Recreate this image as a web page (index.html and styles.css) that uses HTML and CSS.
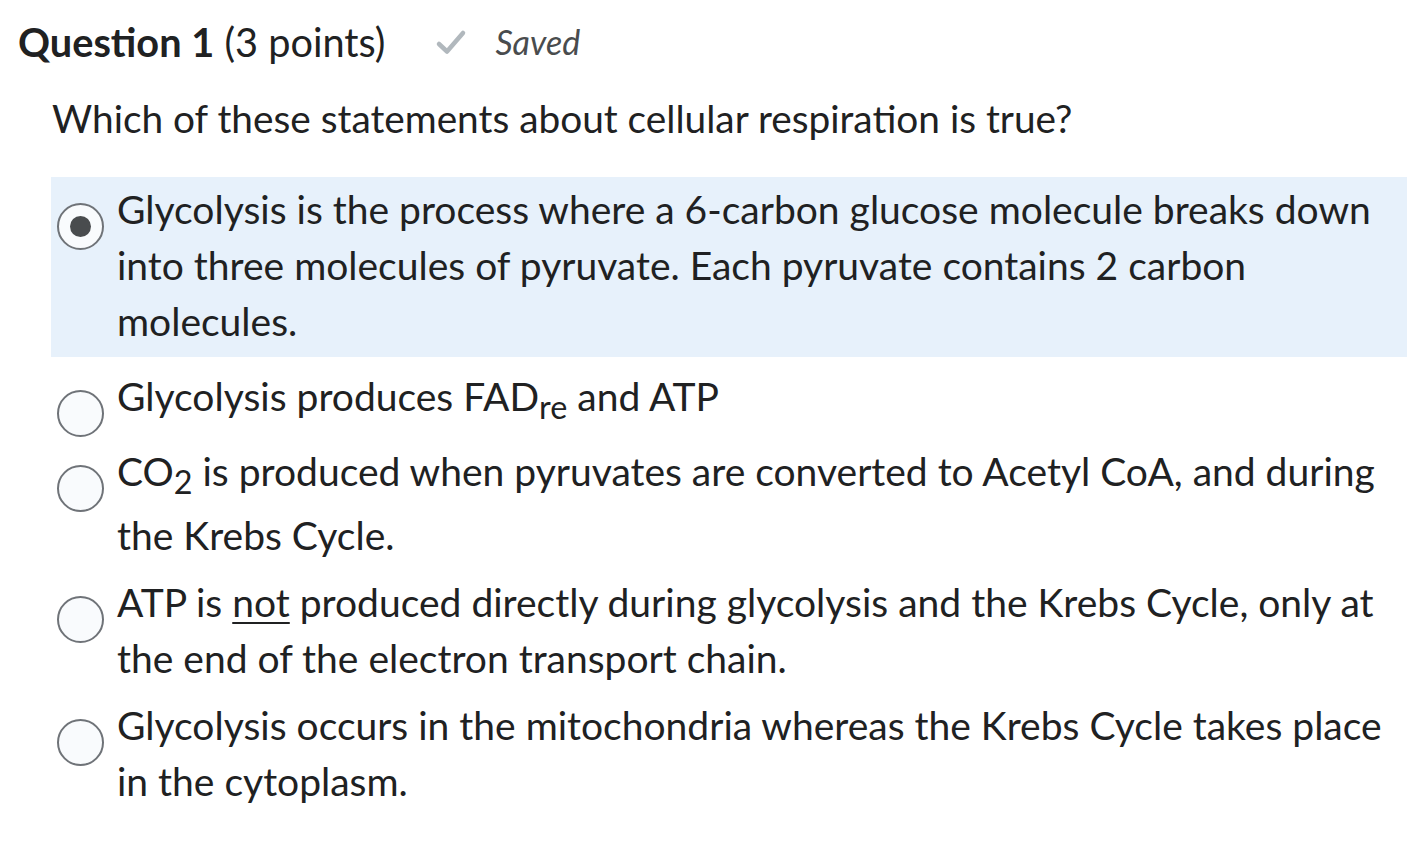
FILE: index.html
```html
<!DOCTYPE html>
<html>
<head>
<meta charset="utf-8">
<link rel="stylesheet" href="styles.css">
</head>
<body>
<div class="question">
  <div class="q-header">
    <h2 class="q-title"><strong>Question 1</strong> (3 points)</h2>
    <span class="saved">
      <svg class="check" width="32" height="28" viewBox="0 0 32 28"><path d="M4 16 L12 23.5 L28 5" fill="none" stroke="#b1b8bd" stroke-width="4.5" stroke-linecap="round" stroke-linejoin="round"/></svg>
      <em>Saved</em>
    </span>
  </div>
  <p class="prompt">Which of these statements about cellular respiration is true?</p>
  <div class="options">
    <label class="option selected">
      <span class="radio checked"><span class="dot"></span></span>
      <span class="otext">Glycolysis is the process where a 6-carbon glucose molecule breaks down into three molecules of pyruvate. Each pyruvate contains 2 carbon molecules.</span>
    </label>
    <label class="option">
      <span class="radio"></span>
      <span class="otext">Glycolysis produces FAD<sub>re</sub> and ATP</span>
    </label>
    <label class="option">
      <span class="radio"></span>
      <span class="otext">CO<sub>2</sub> is produced when pyruvates are converted to Acetyl CoA, and during the Krebs Cycle.</span>
    </label>
    <label class="option">
      <span class="radio"></span>
      <span class="otext">ATP is <u>not</u> produced directly during glycolysis and the Krebs Cycle, only at the end of the electron transport chain.</span>
    </label>
    <label class="option">
      <span class="radio"></span>
      <span class="otext">Glycolysis occurs in the mitochondria whereas the Krebs Cycle takes place in the cytoplasm.</span>
    </label>
  </div>
</div>
</body>
</html>
```
FILE: styles.css
```css
html, body {
  margin: 0;
  padding: 0;
  background: #ffffff;
}
body {
  font-family: Lato, "Noto Sans", sans-serif;
  color: #202122;
}
.question {
  padding: 14px 0 0 18px;
}
.q-header {
  display: flex;
  align-items: center;
  height: 56px;
}
.q-title {
  margin: 0;
  font-size: 39.7px;
  font-weight: 400;
  line-height: 56px;
}
.q-title strong {
  font-weight: 700;
}
.saved {
  display: flex;
  align-items: center;
  margin-left: 50px;
  color: #494c4e;
  font-size: 34px;
  line-height: 56px;
}
.saved .check {
  margin-right: 28px;
}
.saved em {
  font-style: italic;
}
.prompt {
  margin: 20px 0 0 34px;
  font-size: 38.8px;
  line-height: 56px;
}
.options {
  margin: 31px 0 0 33px;
  width: 1356px;
}
.option {
  display: flex;
  align-items: flex-start;
  padding: 6px 0 5px 6px;
  font-size: 39px;
  line-height: 56px;
}
.option.selected {
  background: #e7f1fb;
  padding-top: 4px;
  padding-bottom: 8px;
  margin-bottom: 5px;
}
.radio {
  flex: none;
  width: 43px;
  height: 43px;
  border: 2px solid #6f7378;
  border-radius: 50%;
  background: #f9fbfd;
  margin-top: 22px;
  margin-bottom: -16px;
  margin-right: 13px;
  display: flex;
  align-items: center;
  justify-content: center;
}
.dot {
  width: 21px;
  height: 21px;
  border-radius: 50%;
  background: #494c4e;
}
.otext sub {
  font-size: 0.83em;
  vertical-align: -8px;
  line-height: 50px;
}
.otext u {
  text-decoration-thickness: 2px;
  text-underline-offset: 5px;
}
```
